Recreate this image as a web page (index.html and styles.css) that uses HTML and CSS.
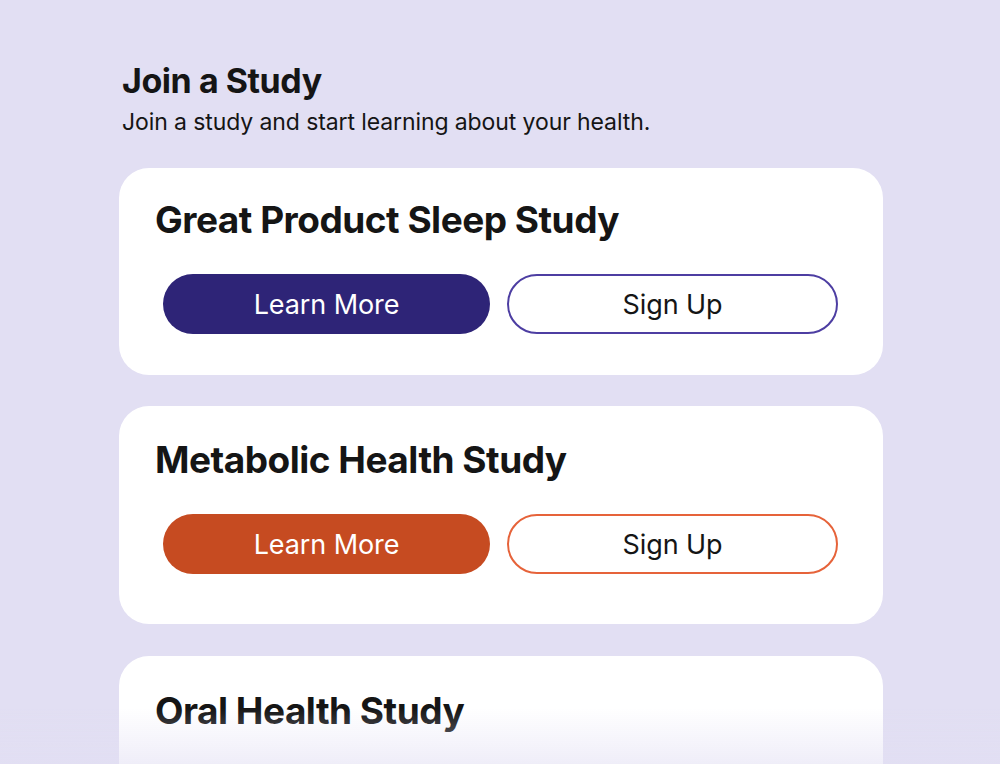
FILE: index.html
```html
<!DOCTYPE html>
<html lang="en">
<head>
<meta charset="utf-8">
<title>Join a Study</title>
<link rel="stylesheet" href="styles.css">
</head>
<body>
<main class="page">
  <header class="intro">
    <h1 class="intro-title">Join a Study</h1>
    <p class="intro-text">Join a study and start learning about your health.</p>
  </header>
  <section class="card card-sleep">
    <h2 class="card-title">Great Product Sleep Study</h2>
    <div class="actions">
      <button class="btn btn-fill btn-purple">Learn More</button>
      <button class="btn btn-outline btn-outline-purple">Sign Up</button>
    </div>
  </section>
  <section class="card card-metabolic">
    <h2 class="card-title">Metabolic Health Study</h2>
    <div class="actions">
      <button class="btn btn-fill btn-orange">Learn More</button>
      <button class="btn btn-outline btn-outline-orange">Sign Up</button>
    </div>
  </section>
  <section class="card card-oral">
    <h2 class="card-title">Oral Health Study</h2>
  </section>
</main>
<div class="fade"></div>
</body>
</html>
```
FILE: styles.css
```css
* { box-sizing: border-box; }
html, body {
  margin: 0;
  padding: 0;
  background: #e2dff3;
  height: 764px;
  overflow: hidden;
}
body {
  font-family: Inter, "Noto Sans", sans-serif;
  color: #151515;
}
.page {
  width: 764px;
  margin-left: 119px;
  padding-top: 61px;
  display: flex;
  flex-direction: column;
}
.intro {
  padding-left: 3px;
  margin-bottom: 32px;
}
.intro-title {
  margin: 0;
  font-size: 34px;
  line-height: 40px;
  font-weight: 700;
  letter-spacing: -0.45px;
}
.intro-text {
  margin: 7px 0 0;
  font-size: 23px;
  line-height: 28px;
  font-weight: 400;
  letter-spacing: -0.1px;
}
.card {
  background: #ffffff;
  border-radius: 30px;
  padding: 30px 36px 41px;
  margin-bottom: 32px;
}
.card-sleep {
  margin-bottom: 31px;
}
.card-metabolic {
  padding-top: 32px;
  padding-bottom: 50px;
}
.card-oral {
  padding-top: 33px;
  padding-bottom: 80px;
}
.card-title {
  margin: 0;
  font-size: 37px;
  line-height: 44px;
  font-weight: 700;
  letter-spacing: -0.5px;
}
.actions {
  display: flex;
  gap: 17px;
  padding: 0 9px 0 8px;
  margin-top: 32px;
}
.btn {
  flex: 1;
  height: 60px;
  border-radius: 30px;
  font-family: Inter, "Noto Sans", sans-serif;
  font-size: 27px;
  font-weight: 400;
  letter-spacing: -0.1px;
  display: flex;
  align-items: center;
  justify-content: center;
  padding: 0;
}
.btn-fill {
  border: none;
  color: #ffffff;
}
.btn-purple { background: #2e2477; }
.btn-orange { background: #c64b21; }
.btn-outline {
  background: #ffffff;
  color: #151515;
  border: 2px solid;
}
.btn-outline-purple { border-color: #4d3ea2; }
.btn-outline-orange { border-color: #e6633a; }
.fade {
  position: fixed;
  left: 0;
  right: 0;
  bottom: 0;
  height: 56px;
  background: linear-gradient(to bottom, rgba(226, 223, 243, 0), rgba(226, 223, 243, 0.55));
  pointer-events: none;
}
```
